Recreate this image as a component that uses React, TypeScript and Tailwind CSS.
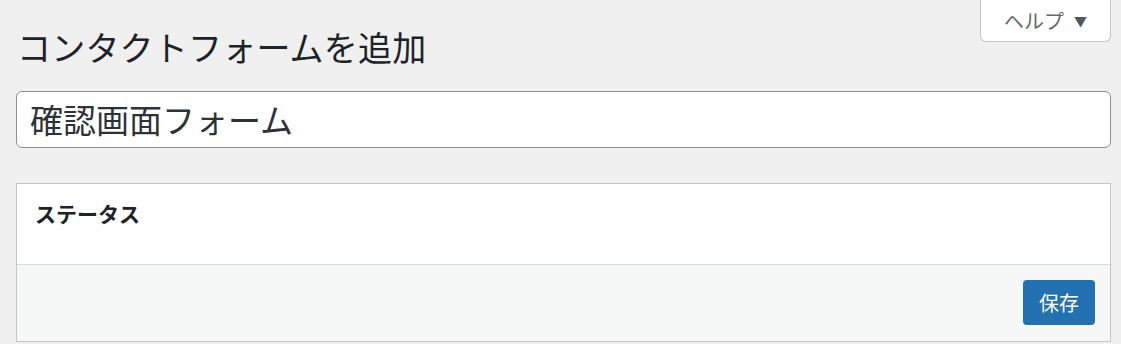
import React from 'react'

const font = { fontFamily: '"Noto Sans CJK JP", "Noto Sans", sans-serif' }

const HelpTab: React.FC = () => {
	return <button className="flex items-center gap-[10px] h-[42px] w-[131px] justify-center bg-white border border-t-0 border-[#c3c4c7] rounded-b-[6px] text-[20px] text-[#646970]">
		<span>ヘルプ</span>
		<span className="text-[13px] text-[#50575e]">▼</span>
	</button>
}

const App: React.FC = () => {
	return <div className="min-h-screen h-[344px] bg-[#f0f0f1] pl-4 pr-[10px] overflow-hidden" style={font}>
		<div className="flex justify-between items-start">
			<h1 className="pt-[25px] pl-[1px] text-[34px] tracking-[0.2px] leading-[44px] text-[#1d2327] font-normal">コンタクトフォームを追加</h1>
			<HelpTab />
		</div>

		<div className="mt-[22px] h-[57px] bg-white border border-[#8c8f94] rounded-[6px] flex items-center px-[13px]">
			<span className="text-[33px] text-[#2c3338] leading-none">確認画面フォーム</span>
		</div>

		<div className="mt-[35px] bg-white border border-[#c3c4c7]">
			<div className="h-[80px] px-[18px] pt-[14px]">
				<h2 className="text-[21px] font-bold text-[#1d2327] leading-[30px]">ステータス</h2>
			</div>
			<div className="h-[77px] bg-[#f6f7f7] border-t border-[#dcdcde] flex justify-end items-start pt-[15px] pr-[15px]">
				<button className="h-[45px] w-[72px] bg-[#2271b1] rounded-[4px] text-white text-[20px]">保存</button>
			</div>
		</div>
	</div>
}

export default App
